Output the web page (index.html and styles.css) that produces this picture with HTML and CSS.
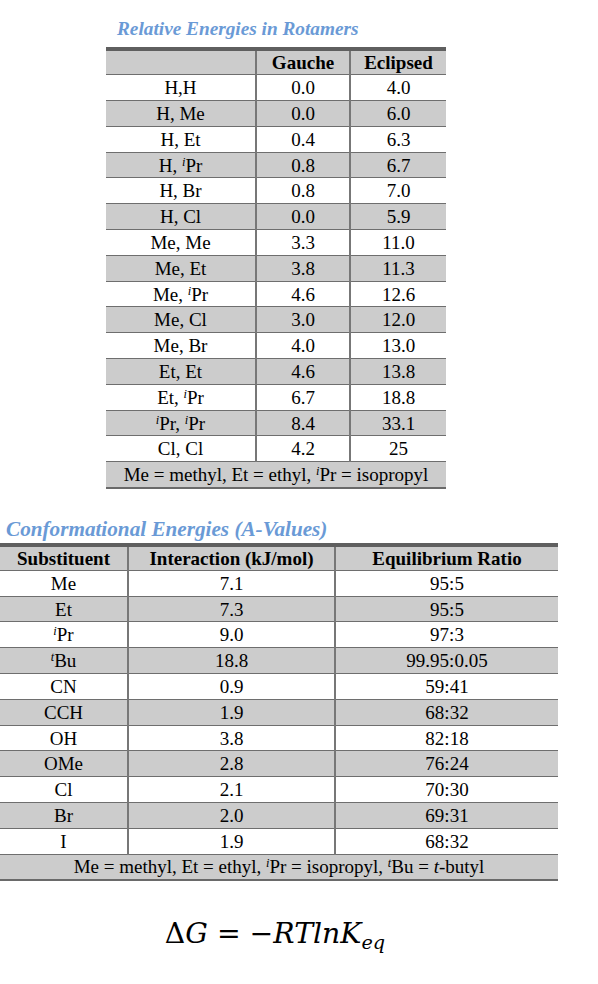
FILE: index.html
```html
<!DOCTYPE html>
<html lang="en">
<head>
  <meta charset="UTF-8">
  <title>Rotamer and A-Value Energies</title>
  <meta name="viewport" content="width=device-width, initial-scale=1.0">
  <link rel="stylesheet" href="styles.css">
</head>
<body>
  <div class="page">
    <section class="block rotamers">
      <h2 class="caption">Relative Energies in Rotamers</h2>
      <table class="data">
        <thead>
          <tr><th class="c-name"></th><th class="c-g">Gauche</th><th>Eclipsed</th></tr>
        </thead>
        <tbody>
          <tr><td>H,H</td><td>0.0</td><td>4.0</td></tr>
          <tr><td>H, Me</td><td>0.0</td><td>6.0</td></tr>
          <tr><td>H, Et</td><td>0.4</td><td>6.3</td></tr>
          <tr><td>H, <sup>i</sup>Pr</td><td>0.8</td><td>6.7</td></tr>
          <tr><td>H, Br</td><td>0.8</td><td>7.0</td></tr>
          <tr><td>H, Cl</td><td>0.0</td><td>5.9</td></tr>
          <tr><td>Me, Me</td><td>3.3</td><td>11.0</td></tr>
          <tr><td>Me, Et</td><td>3.8</td><td>11.3</td></tr>
          <tr><td>Me, <sup>i</sup>Pr</td><td>4.6</td><td>12.6</td></tr>
          <tr><td>Me, Cl</td><td>3.0</td><td>12.0</td></tr>
          <tr><td>Me, Br</td><td>4.0</td><td>13.0</td></tr>
          <tr><td>Et, Et</td><td>4.6</td><td>13.8</td></tr>
          <tr><td>Et, <sup>i</sup>Pr</td><td>6.7</td><td>18.8</td></tr>
          <tr><td><sup>i</sup>Pr, <sup>i</sup>Pr</td><td>8.4</td><td>33.1</td></tr>
          <tr><td>Cl, Cl</td><td>4.2</td><td>25</td></tr>
        </tbody>
        <tfoot>
          <tr><td colspan="3">Me = methyl, Et = ethyl, <sup>i</sup>Pr = isopropyl</td></tr>
        </tfoot>
      </table>
    </section>

    <section class="block avalues">
      <h2 class="caption">Conformational Energies (A-Values)</h2>
      <table class="data">
        <thead>
          <tr><th class="c-sub">Substituent</th><th class="c-int">Interaction (kJ/mol)</th><th>Equilibrium Ratio</th></tr>
        </thead>
        <tbody>
          <tr><td>Me</td><td>7.1</td><td>95:5</td></tr>
          <tr><td>Et</td><td>7.3</td><td>95:5</td></tr>
          <tr><td><sup>i</sup>Pr</td><td>9.0</td><td>97:3</td></tr>
          <tr><td><sup>t</sup>Bu</td><td>18.8</td><td>99.95:0.05</td></tr>
          <tr><td>CN</td><td>0.9</td><td>59:41</td></tr>
          <tr><td>CCH</td><td>1.9</td><td>68:32</td></tr>
          <tr><td>OH</td><td>3.8</td><td>82:18</td></tr>
          <tr><td>OMe</td><td>2.8</td><td>76:24</td></tr>
          <tr><td>Cl</td><td>2.1</td><td>70:30</td></tr>
          <tr><td>Br</td><td>2.0</td><td>69:31</td></tr>
          <tr><td>I</td><td>1.9</td><td>68:32</td></tr>
        </tbody>
        <tfoot>
          <tr><td colspan="3">Me = methyl, Et = ethyl, <sup>i</sup>Pr = isopropyl, <sup>t</sup>Bu = <i>t</i>-butyl</td></tr>
        </tfoot>
      </table>
    </section>

    <p class="equation">
      <span class="up">&Delta;</span><i>G</i> <span class="up">=</span> <span class="up">&minus;</span><i>RTlnK</i><sub><i>eq</i></sub>
    </p>
  </div>
</body>
</html>
```

FILE: styles.css
```css
* {
  box-sizing: border-box;
  margin: 0;
  padding: 0;
}

body {
  background: #ffffff;
  color: #000000;
  font-family: 'Liberation Serif', 'Times New Roman', serif;
}

.page {
  width: 558px;
  padding-top: 16px;
}

.caption {
  color: #6a9ad6;
  font-size: 19.3px;
  font-weight: 700;
  font-style: italic;
  line-height: 26px;
  height: 31px;
}

.rotamers {
  margin-left: 106px;
  width: 340px;
}

.rotamers .caption {
  padding-left: 11px;
}

.avalues {
  margin-top: 29px;
}

.avalues .caption {
  padding-left: 6px;
  font-size: 21.2px;
  line-height: 22px;
  height: 25px;
}

.data {
  border-collapse: collapse;
  width: 100%;
  font-size: 19px;
  line-height: 1;
  text-align: center;
  border-top: 4px solid #5f5f5f;
  border-bottom: 2px solid #6a6a6a;
}

.data th,
.data td {
  height: 25.8px;
  padding: 0;
  vertical-align: middle;
  border-bottom: 1px solid #6e6e6e;
}

.data th {
  font-weight: 700;
  background: #cccccc;
}

.data th + th,
.data tbody td + td {
  border-left: 2px solid #777777;
}

.data tbody tr:nth-child(even) td,
.data tfoot td {
  background: #cccccc;
}

.data tfoot td {
  border-bottom: none;
}

.c-name { width: 150px; }
.c-g { width: 94px; }
.c-sub { width: 128px; }
.c-int { width: 207px; }

.data sup {
  font-size: 0.65em;
  font-style: italic;
  vertical-align: 0.5em;
  line-height: 0;
}

.equation {
  margin-top: 33px;
  padding-right: 8px;
  text-align: center;
  font-family: 'DejaVu Serif', serif;
  font-size: 28.3px;
  line-height: 40px;
}

.equation sub {
  font-size: 0.68em;
  vertical-align: -0.3em;
  line-height: 0;
}
```
